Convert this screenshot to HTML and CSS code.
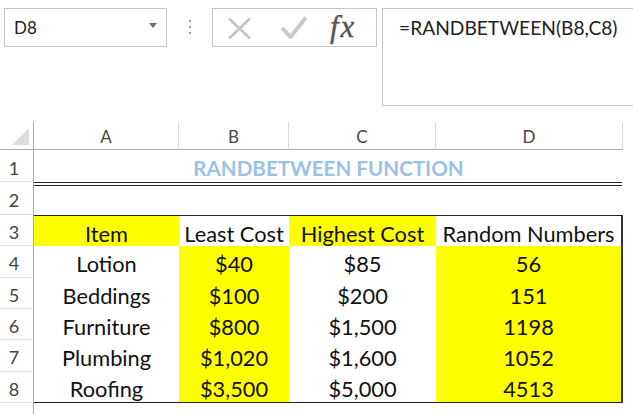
FILE: index.html
```html
<!DOCTYPE html>
<html>
<head>
<meta charset="utf-8">
<link rel="stylesheet" href="styles.css">
</head>
<body>
<div class="fbar">
  <div class="namebox"><span class="nb-text">D8</span><span class="nb-arrow"></span></div>
  <div class="sep"><i></i><i></i><i></i></div>
  <div class="fxbox">
    <svg class="ic-x" width="25" height="23" viewBox="0 0 25 23"><path d="M2 1.5 L23 21.5 M23 1.5 L2 21.5" stroke="#C4C4C4" stroke-width="2.6" fill="none"/></svg>
    <svg class="ic-check" width="28" height="25" viewBox="0 0 28 25"><path d="M2 13 L10.5 22 L26 2.5" stroke="#C8C8C8" stroke-width="4" fill="none" stroke-linejoin="round"/></svg>
    <span class="fx">fx</span>
  </div>
  <div class="formula">=RANDBETWEEN(B8,C8)</div>
</div>
<div class="sheet">
  <div class="corner"><svg width="17" height="17" viewBox="0 0 17 17"><path d="M17 0 L17 17 L0 17 Z" fill="#DCDCDC"/></svg></div>
  <div class="colh">A</div>
  <div class="colh">B</div>
  <div class="colh">C</div>
  <div class="colh">D</div>

  <div class="rowh">1</div>
  <div class="title">RANDBETWEEN FUNCTION</div>

  <div class="rowh">2</div>
  <div class="blank2"></div>

  <div class="rowh">3</div>
  <div class="c top y">Item</div>
  <div class="c top">Least Cost</div>
  <div class="c top y">Highest Cost</div>
  <div class="c top last">Random Numbers</div>

  <div class="rowh">4</div>
  <div class="c">Lotion</div>
  <div class="c y">$40</div>
  <div class="c">$85</div>
  <div class="c y last">56</div>

  <div class="rowh">5</div>
  <div class="c">Beddings</div>
  <div class="c y">$100</div>
  <div class="c">$200</div>
  <div class="c y last">151</div>

  <div class="rowh">6</div>
  <div class="c">Furniture</div>
  <div class="c y">$800</div>
  <div class="c">$1,500</div>
  <div class="c y last">1198</div>

  <div class="rowh">7</div>
  <div class="c">Plumbing</div>
  <div class="c y">$1,020</div>
  <div class="c">$1,600</div>
  <div class="c y last">1052</div>

  <div class="rowh">8</div>
  <div class="c bot">Roofing</div>
  <div class="c y bot">$3,500</div>
  <div class="c bot">$5,000</div>
  <div class="c y bot last">4513</div>

  <div class="rowh tailh"></div>
  <div class="tail"></div>
</div>
</body>
</html>
```
FILE: styles.css
```css
html, body {
  margin: 0;
  padding: 0;
  background: #fff;
}
body {
  width: 633px;
  height: 414px;
  overflow: hidden;
  font-family: Lato, "Open Sans", sans-serif;
  color: #111;
}
.fbar {
  display: flex;
  align-items: flex-start;
  height: 106px;
  box-sizing: border-box;
  padding: 8px 0 0 4px;
}
.namebox {
  width: 163px;
  height: 39px;
  box-sizing: border-box;
  border: 1px solid #C6C6C6;
  display: flex;
  align-items: center;
  justify-content: space-between;
  padding: 0 9px 0 9px;
}
.nb-text {
  font-size: 17px;
  color: #222;
}
.nb-arrow {
  width: 0;
  height: 0;
  border-left: 4.5px solid transparent;
  border-right: 4.5px solid transparent;
  border-top: 5px solid #6B6B6B;
  margin-bottom: 4px;
}
.sep {
  width: 45px;
  display: flex;
  flex-direction: column;
  align-items: center;
  gap: 4px;
  padding-top: 12px;
}
.sep i {
  display: block;
  width: 2px;
  height: 2px;
  background: #9A9A9A;
}
.fxbox {
  width: 165px;
  height: 39px;
  box-sizing: border-box;
  border: 1px solid #C6C6C6;
  display: flex;
  align-items: center;
  padding-left: 14px;
}
.ic-x {
  margin-top: 1px;
}
.ic-check {
  margin-left: 28px;
}
.fx {
  margin-left: 22px;
  font-family: "Liberation Serif", "DejaVu Serif", serif;
  font-style: italic;
  font-size: 31px;
  letter-spacing: 2px;
  color: #555;
  line-height: 1;
  margin-top: -2px;
  -webkit-text-stroke: 0.4px #555;
}
.formula {
  flex: 1;
  margin-left: 5px;
  height: 98px;
  box-sizing: border-box;
  border: 1px solid #C6C6C6;
  border-right: none;
  padding: 5px 0 0 16px;
  font-size: 19.2px;
  line-height: 28px;
  color: #222;
}
.sheet {
  margin-top: 16px;
  width: 623px;
  display: grid;
  grid-template-columns: 34px 145px 110px 147px 187px;
  grid-template-rows: 28px 32px 33px repeat(6, 31.333px) 11px;
}
.sheet > div {
  box-sizing: border-box;
}
.corner {
  border-right: 1px solid #ABABAB;
  border-bottom: 1px solid #ABABAB;
  display: flex;
  justify-content: flex-end;
  align-items: flex-end;
  padding: 0 4px 4px 0;
}
.corner svg {
  display: block;
}
.colh {
  border-right: 1px solid #DADADA;
  border-bottom: 1px solid #ABABAB;
  display: flex;
  align-items: center;
  justify-content: center;
  padding-top: 2px;
  font-size: 17px;
  color: #444;
}
.rowh {
  border-right: 1px solid #ABABAB;
  border-bottom: 1px solid #E0E0E0;
  display: flex;
  align-items: center;
  justify-content: center;
  padding: 4px 5px 0 0;
  font-size: 18px;
  color: #444;
}
.tailh {
  border-bottom: none;
}
.title {
  grid-column: 2 / 6;
  display: flex;
  align-items: center;
  justify-content: center;
  padding-top: 3px;
  font-weight: 700;
  font-size: 20.6px;
  color: #9BC2E6;
}
.blank2 {
  grid-column: 2 / 6;
  border-top: 4px double #222;
  margin-right: 1px;
}
.tail {
  grid-column: 2 / 6;
}
.c {
  display: flex;
  align-items: center;
  justify-content: center;
  padding-top: 4px;
  font-size: 21.8px;
  color: #111;
  white-space: nowrap;
}
.y {
  background: #FFFF00;
}
.top {
  border-top: 1px solid #222;
}
.bot {
  border-bottom: 1px solid #222;
}
.last {
  border-right: 2px solid #333;
}
```
